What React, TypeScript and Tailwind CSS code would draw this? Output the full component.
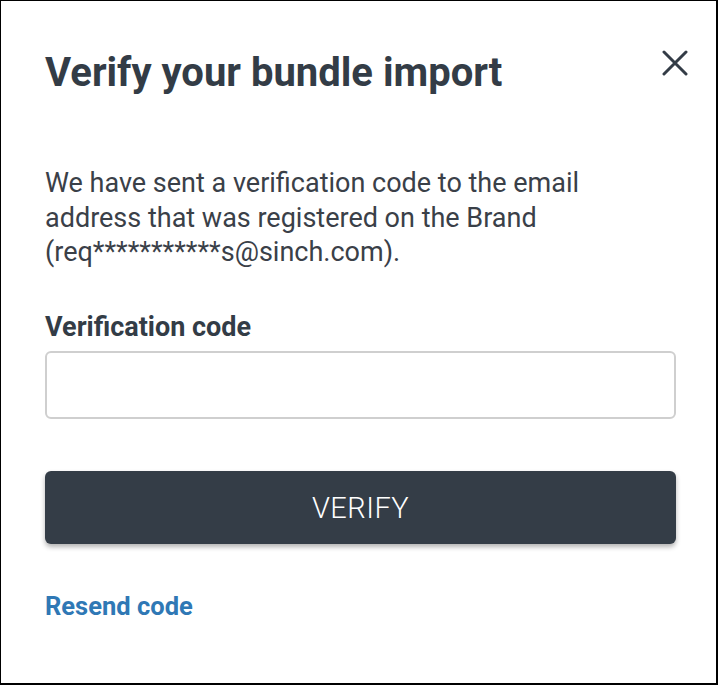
export default function App() {
  return (
    <div className="w-[719px] h-[686px] bg-white" style={{ fontFamily: "Roboto, 'Liberation Sans', sans-serif" }}>
      <div className="relative w-[718px] h-[685px] border-t border-l border-r-2 border-b-2 border-black pl-[44px] pt-[50px]">
        <h1 className="text-[40px] leading-[44px] font-bold text-[#333c46] tracking-[0px]">Verify your bundle import</h1>
        <button className="absolute left-[661px] top-[49px] w-[26px] h-[26px] text-[#333c46]" aria-label="Close">
          <svg width="26" height="26" viewBox="0 0 26 26" fill="none" stroke="currentColor" strokeWidth="3" strokeLinecap="round">
            <path d="M2 2 L24 24 M24 2 L2 24" />
          </svg>
        </button>

        <p className="mt-[71px] text-[27px] leading-[34.5px] text-[#3a4048] w-[600px]">
          We have sent a verification code to the email address that was registered on the Brand (req***********s@sinch.com).
        </p>

        <label className="block mt-[41px] text-[27px] leading-[32px] font-bold text-[#333c46]">Verification code</label>
        <input className="mt-[8px] block w-[631px] h-[68px] rounded-[6px] border-2 border-[#cfcfcf] outline-none px-4 text-[22px]" />

        <button className="mt-[52px] block w-[631px] h-[73px] pt-[4px] rounded-[6px] bg-[#343d47] text-white text-[29px] font-light tracking-[0.5px] shadow-[0_3px_5px_rgba(0,0,0,0.3)]">
          VERIFY
        </button>

        <a className="block mt-[46px] text-[25.5px] leading-[32px] font-bold text-[#2f78b5]" href="#">Resend code</a>
      </div>
    </div>
  );
}
